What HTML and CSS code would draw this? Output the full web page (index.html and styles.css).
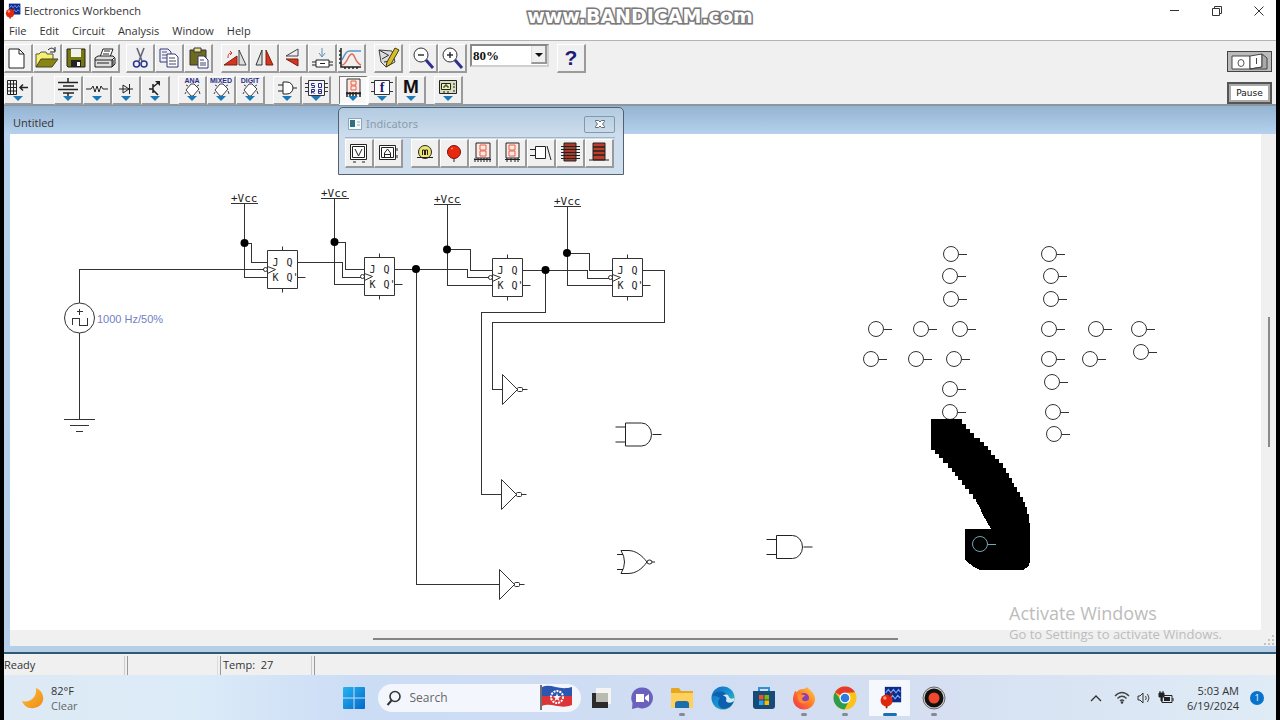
FILE: index.html
```html
<!DOCTYPE html>
<html lang="en">
<head>
<meta charset="utf-8">
<title>Electronics Workbench</title>
<link rel="stylesheet" href="styles.css">
</head>
<body>
<svg class="defs" aria-hidden="true">
  <defs>
    <path id="drop" d="M8 19h10l-5 5z" fill="#1c79b8"/>
    <g id="ewb">
      <rect x="8" y="1" width="19" height="18" fill="#0a2c8c"/>
      <path d="M9 8l3-4 3 4 3-4 3 4 3-4 2 3M9 14h6l2-3 3 4 3-4 3 3" fill="none" stroke="#7fa4f0" stroke-width="1.4"/>
      <circle cx="10" cy="17" r="7" fill="#e0280c"/>
      <circle cx="8" cy="14" r="2" fill="#ff9a80"/>
      <path d="M10 23v3M13 12l4-4" stroke="#a01808" stroke-width="2"/>
    </g>
    <g id="diamond"><path d="M12 7h3l5 5-6 7h-2l-5-6z" fill="#fff" stroke="#444"/><path d="M9 9L7 8M18 9l2-1M7 15l-1 2M20 14l1 3" stroke="#444" fill="none"/></g>
    <g id="lamp" fill="none" stroke="#333"><circle r="7.5"/><path d="M8 .5h8"/></g>
    <g id="ff" fill="none" stroke="#333">
      <path d="M0 0h30v38H0zM15 0v-4M15 38v4M30 27h8M0 16l8 3-8 4"/>
      <circle cx="-2" cy="19" r="2"/>
      <g class="pin small"><text x="5" y="15">J</text><text x="19" y="15">Q</text><text x="5" y="30">K</text><text x="19" y="30">Q'</text></g>
    </g>
    <g id="inv" fill="none" stroke="#333"><path d="M0-15v30L15 0zM20 0h5"/><rect x="15" y="-2" width="5" height="4" rx="1"/></g>
    <g id="and" fill="none" stroke="#222"><path d="M0-11.500h16a10 11.500 0 0 1 0 23H0zM-10-7.500H0M-10 7.500H0M27 0h9"/></g>
    <linearGradient id="winblue" x2="1" y2="1"><stop stop-color="#25b5f2"/><stop offset="1" stop-color="#0568c8"/></linearGradient>
    <linearGradient id="edge" x2="1" y2="1"><stop stop-color="#1667b8"/><stop offset=".5" stop-color="#1593d8"/><stop offset="1" stop-color="#50c878"/></linearGradient>
    <linearGradient id="fox" x1="1" x2="0" y2="1"><stop stop-color="#ffd33c"/><stop offset=".5" stop-color="#ff7a28"/><stop offset="1" stop-color="#ee2858"/></linearGradient>
    <linearGradient id="moon" x2="1" y2="1"><stop stop-color="#ffc13a"/><stop offset="1" stop-color="#ef8a17"/></linearGradient>
  </defs>
</svg>
<div class="app">
  <header class="titlebar">
    <svg class="logo" viewBox="0 0 28 28"><use href="#ewb"/></svg>
    <h1>Electronics Workbench</h1>
    <p class="bandicam">www.BANDICAM.com</p>
    <div class="winbtns">
      <button aria-label="Minimize"><svg width="12" height="12" viewBox="0 0 12 12"><path d="M1 5.500h9"/></svg></button>
      <button aria-label="Restore"><svg width="12" height="12" viewBox="0 0 12 12"><path d="M1.500 3.500h7v7h-7zM3.500 3V1.500h7v7H9"/></svg></button>
      <button aria-label="Close"><svg width="12" height="12" viewBox="0 0 12 12"><path d="M1.500 1.500l9 9M10.500 1.500l-9 9"/></svg></button>
    </div>
  </header>
  <nav class="menu"><button>File</button><button>Edit</button><button>Circuit</button><button>Analysis</button><button>Window</button><button>Help</button></nav>

  <section class="tools">
    <div class="bars">
      <div class="bar">
        <div class="grp">
          <button class="tb" aria-label="New"><svg viewBox="0 0 26 26"><path d="M4 4h10l5 5v14H4z" fill="#fff" stroke="#222"/><path d="M14 4v5h5" fill="none" stroke="#222"/></svg></button>
          <button class="tb" aria-label="Open"><svg viewBox="0 0 26 26"><path d="M2 22V9h3l2-2h5l1 2h6v5" fill="#f4f070" stroke="#554"/><path d="M2 22l5-8h17l-6 8z" fill="#8a8410" stroke="#443"/><path d="M14 5c3-3 6-2 7 1m0-4v5h-5" fill="none" stroke="#222"/></svg></button>
          <button class="tb" aria-label="Save"><svg viewBox="0 0 26 26"><path d="M4 4h18v18H5l-1-1z" fill="#77760f" stroke="#222"/><path d="M8 4h10v8H8z" fill="#f2f2ec"/><path d="M8 15h10v7H8z" fill="#222"/><path d="M14 17h3v4h-3z" fill="#fff"/></svg></button>
          <button class="tb" aria-label="Print"><svg viewBox="0 0 26 26"><path d="M8 12l3-8h10l-3 8z" fill="#fff" stroke="#222"/><path d="M12 6h6M11 9h6" stroke="#222"/><path d="M3 13l3-2h15l2 2v6l-3 3H3z" fill="#ddd" stroke="#222"/><path d="M3 15h17v7M20 15l3-3M5 18h12M21 15v6" fill="none" stroke="#222"/></svg></button>
        </div>
        <div class="grp g6">
          <button class="tb" aria-label="Cut"><svg viewBox="0 0 26 26"><path d="M10 3l5 13M17 3l-5 13" stroke="#667" stroke-width="1.600" fill="none"/><circle cx="9.500" cy="19" r="3" fill="none" stroke="#2b3590" stroke-width="1.500"/><circle cx="17" cy="19" r="3" fill="none" stroke="#2b3590" stroke-width="1.500"/></svg></button>
          <button class="tb" aria-label="Copy"><svg viewBox="0 0 26 26"><path d="M4 4h8l3 3v10H4z" fill="#eef" stroke="#34397a"/><path d="M6 7h5M6 10h5M6 13h5" stroke="#556"/><path d="M11 9h8l3 3v10H11z" fill="#fff" stroke="#34397a"/><path d="M13 13h6M13 16h7M13 19h7" stroke="#445"/></svg></button>
          <button class="tb" aria-label="Paste"><svg viewBox="0 0 26 26"><path d="M5 5h16v15H5z" fill="#6d6b20" stroke="#333"/><path d="M9 3h7v4H9z" fill="#e8e090" stroke="#333"/><path d="M13 11h6l4 4v8H13z" fill="#fff" stroke="#34397a"/><path d="M15 15h4M15 18h6M15 20h6" stroke="#446"/></svg></button>
        </div>
        <div class="grp g8">
          <button class="tb" aria-label="Rotate"><svg viewBox="0 0 26 26"><path d="M2 20l13-9v9z" fill="#d7331f" stroke="#721"/><path d="M17 5v15h7z" fill="#ddd" stroke="#444"/><path d="M6 13c0-4 1-5 4-5l-2-2m2 2l-2 2" fill="none" stroke="#d7331f"/></svg></button>
          <button class="tb" aria-label="Flip horizontal"><svg viewBox="0 0 26 26"><path d="M11 5v15H5z" fill="#ddd" stroke="#333"/><path d="M15 5v15h7z" fill="#d7331f" stroke="#721"/></svg></button>
          <button class="tb" aria-label="Flip vertical"><svg viewBox="0 0 26 26"><path d="M18 4v7H6z" fill="#eee" stroke="#444"/><path d="M18 21v-7H6z" fill="#d7331f" stroke="#721"/></svg></button>
          <button class="tb" aria-label="Component properties"><svg viewBox="0 0 26 26"><path d="M7 15h13v7H7zM3 17h4M3 20h4M20 17h4M20 20h4" fill="#fff" stroke="#222"/><path d="M13 3v8m-3-3l3 4 3-4" fill="none" stroke="#5b93b9"/><path d="M11 18h5v1h-5z" fill="#222"/></svg></button>
          <button class="tb" aria-label="Display graphs"><svg viewBox="0 0 26 26"><path d="M3 3v19h20M1 6h2M1 10h2M1 14h2M1 18h2M7 22v2M11 22v2M15 22v2M19 22v2" fill="none" stroke="#222" stroke-width="1.500"/><path d="M4 15c4-8 5-9 8-9h11" fill="none" stroke="#5a95c8" stroke-width="1.500"/><path d="M4 20c5 0 6-11 10-11 3 0 3 9 9 11" fill="none" stroke="#e06a58" stroke-width="1.500"/></svg></button>
        </div>
        <div class="grp g8">
          <button class="tb" aria-label="Description"><svg viewBox="0 0 26 26"><path d="M4 5l13 1 3 11-9 5-5-5z" fill="#ddd" stroke="#444"/><path d="M4 5l9 5M7 14l7-4M9 17l6-1" stroke="#333"/><path d="M12 17l8-14 4 2-8 14-5 3z" fill="#d6bf24" stroke="#443c10"/></svg></button>
        </div>
        <div class="grp g6">
          <button class="tb" aria-label="Zoom out"><svg viewBox="0 0 26 26"><circle cx="11" cy="10" r="7" fill="#fff" stroke="#333"/><path d="M8 10h6" stroke="#333" stroke-width="1.500"/><path d="M16 15l7 8" stroke="#32308c" stroke-width="3"/></svg></button>
          <button class="tb" aria-label="Zoom in"><svg viewBox="0 0 26 26"><circle cx="11" cy="10" r="7" fill="#fff" stroke="#333"/><path d="M8 10h6M11 7v6" stroke="#333" stroke-width="1.500"/><path d="M16 15l7 8" stroke="#32308c" stroke-width="3"/></svg></button>
          <span class="combo"><select aria-label="Zoom level"><option>80%</option></select><i></i></span>
        </div>
        <div class="grp g8">
          <button class="tb help" aria-label="Help">?</button>
        </div>
      </div>
      <div class="bar">
        <div class="grp">
          <button class="tb" aria-label="Favorites"><svg viewBox="0 0 26 26"><path d="M2.500 3.500h9v14h-9zM3 7h9M3 10.500h9M3 14h9M5.500 3v14M8.500 3v14" fill="none" stroke="#222"/><path d="M23 10.500h-8m3-3l-3 3 3 3" fill="none" stroke="#222" stroke-width="1.500"/><use href="#drop"/></svg></button>
        </div>
        <div class="grp g21">
          <button class="tb" aria-label="Sources"><svg viewBox="0 0 26 26"><path d="M13 1v4M3 5.500h20M8 9h11M3 12.500h20M8 16h11M13 16v4" stroke="#222" stroke-width="1.500"/><use href="#drop"/></svg></button>
          <button class="tb" aria-label="Basic"><svg viewBox="0 0 26 26"><path d="M2 12h5l2-3 2 6 2-6 2 6 2-6 2 3h5" fill="none" stroke="#222"/><use href="#drop"/></svg></button>
          <button class="tb" aria-label="Diodes"><svg viewBox="0 0 26 26"><path d="M6 12h14M10 8v8l6-4zM16.500 7v10" fill="none" stroke="#222"/><use href="#drop"/></svg></button>
          <button class="tb" aria-label="Transistors"><svg viewBox="0 0 26 26"><path d="M7 12h4M11 7v9M11 10l5-4M11 13l5 5" fill="none" stroke="#222" stroke-width="1.500"/><path d="M13 4h5v5z" fill="#222"/><use href="#drop"/></svg></button>
        </div>
        <div class="grp g8">
          <button class="tb" aria-label="Analog ICs"><svg viewBox="0 0 26 26"><text x="13" y="6" class="mini">ANA</text><use href="#diamond"/><use href="#drop"/></svg></button>
          <button class="tb" aria-label="Mixed ICs"><svg viewBox="0 0 26 26"><text x="13" y="6" class="mini">MIXED</text><use href="#diamond"/><use href="#drop"/></svg></button>
          <button class="tb" aria-label="Digital ICs"><svg viewBox="0 0 26 26"><text x="13" y="6" class="mini">DIGIT</text><use href="#diamond"/><use href="#drop"/></svg></button>
        </div>
        <div class="grp g8">
          <button class="tb" aria-label="Logic gates"><svg viewBox="0 0 26 26"><path d="M9 5h4a6 6 0 0 1 0 12H9zM4 8h5M4 14h5M19 11h4" fill="#fff" stroke="#222"/><use href="#drop"/></svg></button>
          <button class="tb" aria-label="Digital"><svg viewBox="0 0 26 26"><path d="M5.500 3.500h16v15h-16zM2 6.500h3M2 10.500h3M2 14.500h3M22 6.500h3M22 10.500h3M22 14.500h3" fill="#f4f4ff" stroke="#333"/><path d="M11.500 6.500h-3v2h3v2h-3M8.500 16.500v-4h3v2h-3l3 2M15.500 6.500h3v4h-3zM15.500 12.500h3v4h-3zM15.500 14.500h3" fill="none" stroke="#2a2f86"/><use href="#drop"/></svg></button>
        </div>
        <div class="grp g8">
          <button class="tb pressed" aria-label="Indicators"><svg viewBox="0 0 26 26"><path d="M7 2h13v14H7z" fill="#ffe9e2" stroke="#333"/><path d="M11 4h5v4h-5zM11 9h5v4h-5z" fill="none" stroke="#e0604c"/><path d="M6 16.500h15M7 15v5M10 15v5M13 15v5M16 15v5M20 15v5" stroke="#222" stroke-width="1.500"/><use href="#drop"/></svg></button>
          <button class="tb" aria-label="Controls"><svg viewBox="0 0 26 26"><path d="M5.500 3.500h15v14h-15zM2 5.500h3M2 14.500h3M21 5.500h3M21 14.500h3" fill="#fff" stroke="#333"/><text x="13" y="15" class="eff">f</text><use href="#drop"/></svg></button>
          <button class="tb" aria-label="Miscellaneous"><svg viewBox="0 0 26 26"><text x="13" y="16" class="em">M</text><use href="#drop"/></svg></button>
        </div>
        <div class="grp g8">
          <button class="tb" aria-label="Instruments"><svg viewBox="0 0 26 26"><path d="M4.500 3.500h17v13h-17z" fill="#d8dfc0" stroke="#222"/><path d="M6.500 6.500h9v6h-9z" fill="#eef5a8" stroke="#222"/><path d="M8 10h2V8h2v2h2M8 15h2M12 15h2M18 7h2M18 10h2M18 14h2" fill="none" stroke="#222"/><use href="#drop"/></svg></button>
        </div>
      </div>
    </div>
    <div class="run">
      <button class="power" aria-label="Power"><svg width="40" height="18" viewBox="0 0 40 18"><path d="M2 3h18v13H2z" fill="#fff" stroke="#444"/><path d="M20 3l12-2v13l-12 2z" fill="#fff" stroke="#444"/><path d="M32 1l5 4v11H20l12-2z" fill="#aaa" stroke="#444"/><ellipse cx="11" cy="10" rx="3" ry="3.500" fill="none" stroke="#555"/><path d="M26.500 5v6" stroke="#444"/></svg></button>
      <button class="pause">Pause</button>
    </div>
  </section>

  <main class="mdi">
    <h2>Untitled</h2>
    <div class="doc">
      <svg class="circuit" role="img" aria-label="Counter circuit">
        <g transform="translate(-10 -134)">
          <g class="wire">
            <path d="M79.500 303V269.500H264M79.500 333V419M64 419.500h31M70 425.500h19M76 431.500h7"/>
            <path d="M231 203.500h27M244.500 203V277.500H267M244.500 243.500h7V262.500H267"/>
            <path d="M321 198.500h28M334.500 198V284.500H365M334.500 242.500h11V269.500H365M297 262.500h45.500V277.500H361"/>
            <path d="M434 204.500h27M447.500 204V285.500H492M447.500 249.500h22.500V270.500H492M395 269.500h72V277.500H489M416.500 269V584.500H500"/>
            <path d="M554 206.500h27M567.500 206V285.500H612M567.500 253.500h22V270.500H612M522 270.500h65V278.500H609M545.500 270V312.500H481.500V494.500H502M643 270.500h21.500V322.500H492.500V389.500H503"/>
          </g>
          <circle cx="79.500" cy="318" r="15" fill="none" stroke="#333"/>
          <path class="wire" d="M72.500 325v-7h7v7h8v-7M77 311.500h6M79.500 309v6"/>
          <g class="dots"><circle cx="244.500" cy="243" r="4"/><circle cx="334.500" cy="242" r="4"/><circle cx="447" cy="249.500" r="4"/><circle cx="567" cy="253" r="4"/><circle cx="416" cy="269" r="4"/><circle cx="545.500" cy="270" r="4"/></g>
          <g class="pin"><text x="231" y="202">+Vcc</text><text x="321" y="197">+Vcc</text><text x="434" y="203">+Vcc</text><text x="554" y="205">+Vcc</text></g>
          <text x="97" y="323" class="freq">1000 Hz/50%</text>
          <use href="#ff" x="267.500" y="250.500"/><use href="#ff" x="364.500" y="257.500"/><use href="#ff" x="492.500" y="258.500"/><use href="#ff" x="612.500" y="258.500"/>
          <use href="#inv" x="502.500" y="389.500"/><use href="#inv" x="501.500" y="494.500"/><use href="#inv" x="499.500" y="584.500"/>
          <use href="#and" x="625.500" y="434.500"/><use href="#and" x="776.500" y="547"/>
          <path d="M621 550.500h7c8 0 14 5 19 11.500-5 7-11 11.500-19 11.500h-7q7-11.500 0-23M617 554.500h6M617 569.500h6M652 562h3" fill="none" stroke="#222"/><ellipse cx="649.500" cy="562" rx="2.500" ry="2" fill="none" stroke="#222"/>
          <use href="#lamp" x="951" y="254"/><use href="#lamp" x="950" y="276"/><use href="#lamp" x="951" y="299"/>
          <use href="#lamp" x="876" y="329"/><use href="#lamp" x="921" y="329"/><use href="#lamp" x="960" y="329"/>
          <use href="#lamp" x="871" y="359"/><use href="#lamp" x="916" y="359"/><use href="#lamp" x="954" y="359"/>
          <use href="#lamp" x="950" y="389"/><use href="#lamp" x="950" y="412"/>
          <use href="#lamp" x="1049" y="254"/><use href="#lamp" x="1051" y="276"/><use href="#lamp" x="1051" y="299"/>
          <use href="#lamp" x="1049" y="329"/><use href="#lamp" x="1096" y="329"/><use href="#lamp" x="1139" y="329"/><use href="#lamp" x="1141" y="352"/>
          <use href="#lamp" x="1049" y="359"/><use href="#lamp" x="1090" y="359"/><use href="#lamp" x="1052" y="382"/><use href="#lamp" x="1053" y="412"/><use href="#lamp" x="1054" y="434"/>
          <path class="trail" d="M931 419H962V424H966V429H970V433H974V438H980V442H984V446H988V450H991V455H995V459H999V463H1003V468H1006V473H1009V478H1012V483H1014V487H1017V492H1020V497H1023V502H1025V507H1027V514H1029V523H1030V562L1028 567L1023 570H980L974 567L965 560V529H991L987 522L983 515L980 508L976 501V499H973V494H969V489H965V485H962V480H958V476H955V472H952V468H948V463H943V458H939V454H935V450H931Z"/>
          <g class="ghost" transform="translate(980 544)"><circle r="7.500"/><path d="M8 .5h8"/></g>
        </g>
      </svg>
      <div class="vscroll"><i></i></div>
      <div class="hscroll"><i></i></div>
      <div class="activate"><strong>Activate Windows</strong><span>Go to Settings to activate Windows.</span></div>
      <svg class="grip" width="10" height="10" viewBox="0 0 10 10"><path d="M8 0h2v2H8zM4 4h2v2H4zM8 4h2v2H8zM0 8h2v2H0zM4 8h2v2H4zM8 8h2v2H8z" fill="#c4c4c4"/></svg>
    </div>
    <aside class="palette">
      <div class="ptitle"><svg width="14" height="12" viewBox="0 0 14 12"><path d="M.5.500h13v11H.5z" fill="#f4f8fb" stroke="#8ea4b8"/><path d="M2 2h5v7H2z" fill="#2f6f86"/><path d="M9 4h3M9 7h3" stroke="#9ab"/></svg><h3>Indicators</h3><button class="pclose" aria-label="Close Indicators"><svg width="12" height="10" viewBox="0 0 12 10"><path d="M1.500 1.500h3L6 3l1.500-1.500h3v1L8.500 5l2 2.500v1h-3L6 7 4.500 8.500h-3v-1l2-2.500-2-2.500z" fill="#fff" stroke="#5c6874"/></svg></button></div>
      <div class="bar">
        <div class="grp">
          <button class="tb" aria-label="Voltmeter"><svg viewBox="0 0 26 26"><path d="M4.500 4.500h16v15h-16z" fill="#fff" stroke="#222"/><path d="M6.500 6.500h12v11h-12z" fill="none" stroke="#222"/><path d="M9 9l3.500 7L16 9M7 22h3M16 22h3" fill="none" stroke="#222"/></svg></button>
          <button class="tb" aria-label="Ammeter"><svg viewBox="0 0 26 26"><path d="M4.500 5.500h16v14h-16z" fill="#fff" stroke="#222"/><path d="M6.500 7.500h12v10h-12z" fill="none" stroke="#222"/><path d="M9.500 17v-4l3-4 3 4v4M9.500 14.500h6M22 8v3M22 15v3" fill="none" stroke="#222"/></svg></button>
        </div>
        <div class="grp g8">
          <button class="tb" aria-label="Bulb"><svg viewBox="0 0 26 26"><circle cx="13" cy="12" r="6.500" fill="#f1e66c" stroke="#222"/><path d="M5 17.500h16M10.500 15v-5h2v5M13.500 15v-5h2v5" fill="none" stroke="#222"/></svg></button>
          <button class="tb" aria-label="Red probe"><svg viewBox="0 0 26 26"><circle cx="13" cy="12" r="6.500" fill="#e8290c" stroke="#711"/><path d="M13 19v3" stroke="#222"/><path d="M10 9l2-1" stroke="#faa"/></svg></button>
          <button class="tb" aria-label="Seven-segment display"><svg viewBox="0 0 26 26"><path d="M6 3h14v15H6z" fill="#ffe9e2" stroke="#222"/><path d="M10 5h6v5h-6zM10 11h6v5h-6z" fill="none" stroke="#e0604c"/><path d="M4 19.500h17M5 18v4M8 18v4M11 18v4M14 18v4M17 18v4M20 18v4" stroke="#222"/></svg></button>
          <button class="tb" aria-label="Decoded seven-segment display"><svg viewBox="0 0 26 26"><path d="M7 3h13v15H7z" fill="#ffe9e2" stroke="#222"/><path d="M10 5h6v5h-6zM10 11h6v5h-6z" fill="none" stroke="#e0604c"/><path d="M6 19.500h15M8 18v4M12 18v4M16 18v4M19 18v4" stroke="#222"/></svg></button>
          <button class="tb" aria-label="Buzzer"><svg viewBox="0 0 26 26"><path d="M7.500 6.500h10v12h-10zM2 9.500h5M2 15.500h5M19 6l4 14" fill="#fff" stroke="#222"/></svg></button>
          <button class="tb" aria-label="Bargraph display"><svg viewBox="0 0 26 26"><path d="M7 3h12v18H7z" fill="#a83c2c" stroke="#222"/><path d="M4 6.500h19M4 9.500h19M4 12.500h19M4 15.500h19M4 18.500h19" stroke="#222"/></svg></button>
          <button class="tb" aria-label="Decoded bargraph display"><svg viewBox="0 0 26 26"><path d="M7 3h12v17H7zM3 20h20" fill="#c03c28" stroke="#222"/><path d="M7 7h12M7 11h12M7 15h12" stroke="#222" stroke-width="1.500"/></svg></button>
        </div>
      </div>
    </aside>
  </main>

  <footer class="status"><span class="s1">Ready</span><span class="s2"></span><span class="s3">Temp:&nbsp; 27</span><span class="s4"></span></footer>

  <div class="taskbar">
    <div class="weather">
      <svg width="22" height="22" viewBox="0 0 22 22"><path d="M14 1C24 5 24 19 12 21 6 22 2 19 0 14c8 2 15-3 14-13z" fill="url(#moon)"/></svg>
      <p><b>82°F</b><span>Clear</span></p>
    </div>
    <div class="center">
      <button class="start" aria-label="Start"><svg width="22" height="22" viewBox="0 0 22 22"><path d="M0 1q0-1 1-1h9.500v10.500H0zM11.500 0H21q1 0 1 1v9.500H11.500zM0 11.500h10.500V22H1q-1 0-1-1zM11.500 11.500H22V21q0 1-1 1h-9.500z" fill="url(#winblue)"/></svg></button>
      <label class="search"><svg width="16" height="16" viewBox="0 0 16 16"><circle cx="9" cy="6.500" r="5" fill="none" stroke="#333" stroke-width="1.600"/><path d="M5.500 10.500L1.500 15" stroke="#333" stroke-width="2"/></svg><input type="text" placeholder="Search" aria-label="Search"><svg width="34" height="27" viewBox="0 0 34 27"><path d="M2 1v25" stroke="#444" stroke-width="1.500"/><path d="M3 3c9-4 17 4 30 0v10H3z" fill="#2c56b0"/><path d="M3 12h30v9c-12 5-20-3-30 1z" fill="#dc3438"/><circle cx="18" cy="13" r="6" fill="none" stroke="#fff" stroke-width="2" stroke-dasharray="2 1"/><path d="M18 9l1 3 3 .5-2.500 1.500 1 3-2.500-1.500-2.500 1.500 1-3-2.500-1.500 3-.5z" fill="#fff"/></svg></label>
      <div class="apps">
        <button aria-label="Task view"><svg viewBox="0 0 24 24"><path d="M7 2h15v16H7z" fill="#f4f4f2"/><path d="M3 7h16v15H3z" fill="#2b2b2b"/><path d="M7 7h12v9H7z" fill="#b9bab2"/></svg></button>
        <button aria-label="Chat"><svg viewBox="0 0 24 24"><path d="M12 1.500a10.500 10.500 0 1 1-4 20L2 23l.5-6A10.500 10.500 0 0 1 12 1.500z" fill="#6a62bd"/><path d="M6 8h8v8H6zM15 11l4-3v8l-4-3z" fill="#fff"/></svg></button>
        <button class="on" aria-label="File Explorer"><svg viewBox="0 0 24 24"><path d="M1 3q0-1 1-1h7l2 3h12v17H1z" fill="#e5a620"/><path d="M1 7h22v15H1z" fill="#ffd05a"/><path d="M5 22v-4q0-3 3-3h8q3 0 3 3v4z" fill="#1c6dae"/></svg></button>
        <button aria-label="Edge"><svg viewBox="0 0 24 24"><circle cx="12" cy="12" r="11.500" fill="url(#edge)"/><path d="M1 10C5 4 15 4 16 11c0 2-1 2-1 4 2 3 6 2 8 0-2 5-6 8-11 8-6-2-6-8-3-11-4-3-7-3-8-2z" fill="#0e5fb0"/><path d="M12 10c3 0 4 2 3 5 2 2 5 2 8 0l0-3c-2 1-4 1-5-1-1-3-4-3-6-1z" fill="#d5e7f5"/></svg></button>
        <button aria-label="Microsoft Store"><svg viewBox="0 0 24 24"><path d="M7 6V2h10v4" fill="none" stroke="#2f93cf" stroke-width="2"/><path d="M1 5h22v15q0 3-3 3H4q-3 0-3-3z" fill="#174a78"/><path d="M7 9h4.500v4.500H7z" fill="#f25022"/><path d="M12.500 9H17v4.500h-4.500z" fill="#7fba00"/><path d="M7 14.500h4.500V19H7z" fill="#22a7f0"/><path d="M12.500 14.500H17V19h-4.500z" fill="#ffb900"/></svg></button>
        <button class="on" aria-label="Firefox"><svg viewBox="0 0 24 24"><path d="M3 5l2 1c2-3 5-3 6-3 2 0 3-1 4-2 1 2 8 5 8 12a11 10.500 0 0 1-22 0c0-3 1-5 2-8z" fill="url(#fox)"/><circle cx="12" cy="12" r="5" fill="#8a3fb4"/><path d="M5 8c3-1 5 1 8 1 0 2-3 2-3 4 1 3 5 3 7 0-1 6-10 6-11 0z" fill="#ff8a30"/></svg></button>
        <button class="on" aria-label="Chrome"><svg viewBox="0 0 24 24"><circle cx="12" cy="12" r="11.500" fill="#fbc316"/><path d="M12 12L2 6.300A11.500 11.500 0 0 1 22 6.300L12 7z" fill="#e33b2e"/><path d="M2 6.300A11.500 11.500 0 0 0 11.500 23.500L16 15l-8-1z" fill="#2d9c4c"/><circle cx="12" cy="12" r="5.500" fill="#fff"/><circle cx="12" cy="12" r="4.300" fill="#2b7de0"/></svg></button>
        <button class="on active" aria-label="Electronics Workbench"><svg viewBox="0 0 28 28"><use href="#ewb"/></svg></button>
        <button class="on" aria-label="Bandicam"><svg viewBox="0 0 24 24"><circle cx="12" cy="12" r="11" fill="#d5d5d5" stroke="#666"/><circle cx="12" cy="12" r="9.500" fill="#111"/><circle cx="12" cy="12" r="5.500" fill="#f0482c"/></svg></button>
      </div>
    </div>
    <div class="tray">
      <button aria-label="Hidden icons"><svg width="12" height="8" viewBox="0 0 12 8"><path d="M1 7l5-5 5 5" fill="none" stroke="#333" stroke-width="1.400"/></svg></button>
      <svg width="16" height="13" viewBox="0 0 16 13"><path d="M1 5q7-7 14 0M3.500 7.500q4.500-4.500 9 0M6 10q2-2 4 0" fill="none" stroke="#444" stroke-width="1.400"/><circle cx="8" cy="11.500" r="1.200" fill="#333"/></svg>
      <svg width="14" height="12" viewBox="0 0 14 12"><path d="M1 4h2l3-3v10L3 8H1z" fill="none" stroke="#333"/><path d="M8.500 4q1.500 2 0 4M10.500 2q3 4 0 8" fill="none" stroke="#444"/></svg>
      <svg width="16" height="14" viewBox="0 0 16 14"><path d="M4 4.500h10v7H4zM15 7v3" fill="none" stroke="#222"/><path d="M6 6h6v4H6z" fill="#222"/><path d="M1 2h5v4H4v4H3V6H1zM2 0v3M5 0v3" fill="#222" stroke="#222"/></svg>
      <p class="clock"><time>5:03 AM</time><span>6/19/2024</span></p>
      <span class="badge">1</span>
    </div>
  </div>
</div>
</body>
</html>
```

FILE: styles.css
```css
* { box-sizing: border-box; }
body {
  margin: 0;
  background: #000;
  color: #333;
  font: 12px/16px "Open Sans", "Noto Sans", sans-serif;
}
h1, h2, h3, p { margin: 0; font-size: inherit; font-weight: 400; }
button { margin: 0; padding: 0; border: 0; background: none; color: inherit; font: inherit; }
svg { display: block; flex: none; }
.defs { position: absolute; width: 0; height: 0; }
.app {
  display: flex;
  flex-direction: column;
  min-height: 100vh;
  margin: 0 4px;
  background: #fff;
}

/* title bar and menu */
.titlebar { display: flex; align-items: center; height: 22px; position: relative; }
.logo { width: 17px; height: 17px; }
.titlebar h1 { margin-left: 3px; font-size: 11px; }
.bandicam {
  position: absolute;
  inset: 4px 0 auto;
  text-align: center;
  font: bold 19px/24px "DejaVu Sans", sans-serif;
  color: #fff;
  -webkit-text-stroke: 3px #757575;
  paint-order: stroke fill;
  text-shadow: 0 0 3px #888;
}
.winbtns { display: flex; gap: 8px; margin-left: auto; position: relative; }
.winbtns button { display: grid; place-items: center; width: 34px; height: 20px; }
.winbtns path { fill: none; stroke: #333; }
.menu { display: flex; gap: 13px; height: 18px; padding-left: 5px; font-size: 11px; line-height: 18px; }

/* toolbars */
.tools {
  display: flex;
  justify-content: space-between;
  height: 66px;
  border-top: 1px solid #b4b4b4;
  border-bottom: 2px solid #8d969e;
  background: #f0f0f0;
}
.bars { display: flex; flex-direction: column; gap: 3px; padding-top: 3px; }
.bar, .grp { display: flex; }
.g6 { margin-left: 6px; }
.g8 { margin-left: 8px; }
.g21 { margin-left: 21px; }
.tb {
  display: grid;
  place-items: center;
  width: 29px;
  height: 29px;
  border: solid;
  border-width: 1px 2px 2px 1px;
  border-color: #fff #9a9a9a #9a9a9a #fff;
  background: #f0f0f0;
}
.tb svg { width: 26px; height: 26px; }
.tb.pressed { border-color: #777 #fff #fff #777; background: #f8f8f8; }
.help { font: bold 21px/24px "Liberation Sans", sans-serif; color: #1c1c78; }
.mini { font: bold 7px "Liberation Sans", sans-serif; fill: #2a2f86; text-anchor: middle; }
.eff { font: bold 14px "Liberation Serif", serif; fill: #1c1c78; text-anchor: middle; }
.em { font: bold 19px "Liberation Sans", sans-serif; fill: #111; text-anchor: middle; }
.combo {
  position: relative;
  width: 79px;
  height: 23px;
  margin-left: 3px;
  border: 2px solid;
  border-color: #888 #d0d0d0 #d0d0d0 #888;
  background: #fff;
}
.combo select {
  width: 100%;
  height: 19px;
  padding: 0 0 0 1px;
  border: 0;
  appearance: none;
  background: transparent;
  color: #111;
  font: bold 13px/18px "Liberation Serif", serif;
}
.combo i {
  position: absolute;
  right: 0;
  top: 0;
  width: 16px;
  height: 18px;
  border: solid;
  border-width: 0 2px 2px 1px;
  border-color: #ddd #999 #999 #ddd;
  background: #f0f0f0;
  pointer-events: none;
}
.combo i::after {
  content: "";
  display: block;
  width: 0;
  margin: 7px auto 0;
  border: 4px solid transparent;
  border-top-color: #111;
  border-bottom: 0;
}
.run { display: flex; flex-direction: column; gap: 10px; padding: 10px 4px 0 0; }
.power, .pause {
  display: grid;
  place-items: center;
  width: 45px;
  height: 22px;
  border: 1px solid #444;
  background: #bbb;
}
.pause { border-width: 2px; border-color: #555; box-shadow: inset 0 0 0 2px #aaa; background: #fff; font: 9px/12px "DejaVu Sans", sans-serif; color: #111; }

/* document window */
.mdi {
  position: relative;
  display: flex;
  flex: 1;
  flex-direction: column;
  padding: 0 0 6px 6px;
  border-bottom: 2px solid #2f5974;
  background: linear-gradient(#94b4d2, #b5d1ed 28px, #b5cfe8);
}
.mdi h2 { height: 28px; padding-left: 3px; font-size: 11px; line-height: 34px; }
.doc {
  position: relative;
  display: grid;
  flex: 1;
  grid-template: minmax(496px, 1fr) 16px / 1fr 15px;
  background: #f0f0f0;
}
.circuit { width: 100%; height: 100%; background: #fff; }
.wire { fill: none; stroke: #333; shape-rendering: crispEdges; }
.dots { fill: #000; }
.pin text { font: 11px "DejaVu Sans Mono", monospace; fill: #222; stroke: none; }
.small text { font-size: 10px; }
.freq { font: 11px "Liberation Sans", sans-serif; fill: #7480c4; }
.trail { fill: #000; shape-rendering: crispEdges; }
.ghost { fill: none; stroke: #6fa9b5; }
.vscroll { padding: 183px 0 0 7px; }
.vscroll i { display: block; width: 2px; height: 130px; background: #8a8a8a; }
.hscroll { display: flex; padding-top: 8px; justify-content: center; }
.hscroll i { width: 42%; height: 2px; background: #858585; }
.activate {
  position: absolute;
  right: 46px;
  bottom: 3px;
  display: flex;
  flex-direction: column;
  width: 221px;
  color: #bcbcbc;
  font-size: 13px;
  line-height: 17px;
  white-space: nowrap;
}
.activate strong { font-size: 18px; line-height: 26px; font-weight: 400; }
.grip { position: absolute; right: 2px; bottom: 1px; }

.palette {
  position: absolute;
  left: 334px;
  top: 1px;
  width: 286px;
  height: 68px;
  padding: 3px 8px 3px 6px;
  border: 1px solid #54626f;
  border-radius: 5px 5px 0 0;
  background: linear-gradient(#b3cbe0, #cddded 28px, #cfdfee);
}
.ptitle { display: flex; align-items: center; height: 26px; padding-left: 3px; color: #8b9cac; font: 11px/16px "Noto Sans", sans-serif; }
.ptitle h3 { margin-left: 4px; }
.pclose { display: grid; place-items: center; width: 31px; height: 17px; margin-left: auto; border: 1px solid #8298ac; border-radius: 2px; }
.palette .bar { padding-top: 1px; border-top: 1px solid #a5b4c2; }

/* status bar */
.status { display: flex; gap: 2px; height: 21px; padding-top: 2px; background: #f0f0f0; font-size: 11px; line-height: 17px; }
.status span { border-left: 1px solid #999; padding-left: 2px; }
.status .s1 { width: 121px; padding: 0; border-left: 0; border-right: 1px solid #ccc; }
.status .s2 { width: 91px; border-right: 1px solid #ddd; }
.status .s3 { width: 92px; border-right: 1px solid #ccc; }
.status .s4 { flex: 1; }

/* taskbar */
.taskbar {
  display: grid;
  grid-template-columns: 1fr auto 1fr;
  align-items: center;
  height: 45px;
  background: linear-gradient(90deg, #ddeaf5, #dcebf8 15%, #cbdcf5 28%, #d4def1 70%, #dfecf6);
}
.weather { display: flex; gap: 7px; padding-left: 18px; font-size: 11px; line-height: 15px; }
.weather svg { margin-top: 4px; }
.weather b, .weather span, .clock time, .clock span { display: block; font-weight: 400; }
.weather span { color: #666; }
.center { display: flex; align-items: center; padding-left: 12px; }
.start { display: grid; place-items: center; width: 32px; height: 36px; }
.search {
  display: flex;
  align-items: center;
  width: 203px;
  height: 28px;
  margin-left: 8px;
  padding: 0 8px;
  border-radius: 14px;
  background: #f3f7fd;
}
.search input { flex: 1; min-width: 0; margin-left: 6px; border: 0; outline: 0; background: transparent; font: 12px/18px "Open Sans", sans-serif; }
.search input::placeholder { color: #666; }
.apps { display: flex; width: 374px; }
.apps button { position: relative; display: grid; flex: 1; place-items: center; height: 36px; }
.apps svg { width: 24px; height: 24px; }
.apps .on::after { content: ""; position: absolute; left: calc(50% - 3px); bottom: 0; width: 6px; height: 3px; border-radius: 2px; background: #858b95; }
.apps .active { border: solid transparent; border-width: 0 4px; background: #f5f8fd; background-clip: padding-box; }
.apps .active::after { left: calc(50% - 7px); width: 14px; background: #1671b8; }
.tray { display: flex; align-items: center; justify-content: flex-end; padding-right: 12px; font-size: 11px; line-height: 15px; }
.tray > button { margin-right: 12px; }
.tray > svg { margin-right: 7px; }
.clock { width: 58px; text-align: right; }
.badge { width: 14px; height: 14px; margin-left: 11px; border-radius: 50%; background: #0873cd; color: #fff; font-size: 9px; line-height: 14px; text-align: center; }
```
